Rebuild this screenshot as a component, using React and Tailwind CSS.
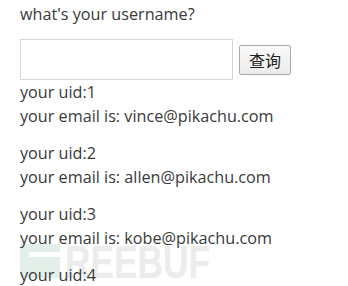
export default function App() {
  const rows = [
    { uid: 1, email: "vince@pikachu.com" },
    { uid: 2, email: "allen@pikachu.com" },
    { uid: 3, email: "kobe@pikachu.com" },
  ];

  return (
    <div className="relative h-[286px] w-[348px] overflow-hidden bg-white font-['Open_Sans',sans-serif] text-[16.2px] text-[#393939]">
      {/* watermark logo */}
      <div className="pointer-events-none absolute left-[20px] top-[238px] flex select-none items-start">
        <svg width="40" height="34" viewBox="0 0 40 34" className="mt-[6px]">
          <rect x="0" y="0" width="40" height="34" fill="#e3efe9" />
          <rect x="9" y="8" width="31" height="5" fill="#ffffff" />
        </svg>
        <span className="ml-[5px] inline-block origin-left scale-x-[0.75] font-['Liberation_Sans',sans-serif] text-[47px] font-bold leading-none text-[#ececec]">
          REEBUF
        </span>
      </div>

      <div className="relative px-[20px] pt-[2px]">
        <p className="leading-[24px]">what's your username?</p>
        <div className="mt-[13px] flex items-center gap-[6px]">
          <input
            type="text"
            className="h-[41px] w-[213px] border border-[#d5d5d5] bg-white outline-none"
          />
          <button className="h-[30px] w-[52px] rounded-[2px] border border-[#a9a9a9] bg-gradient-to-b from-[#fafafa] to-[#ececec] font-['Noto_Sans_CJK_SC',sans-serif] text-[16px] leading-none text-[#222]">
            查询
          </button>
        </div>
        {rows.map((r) => (
          <p key={r.uid} className="mb-[13px] leading-[24px]">
            your uid:{r.uid}
            <br />
            your email is: {r.email}
          </p>
        ))}
        <p className="leading-[24px]">your uid:4</p>
      </div>
    </div>
  );
}
